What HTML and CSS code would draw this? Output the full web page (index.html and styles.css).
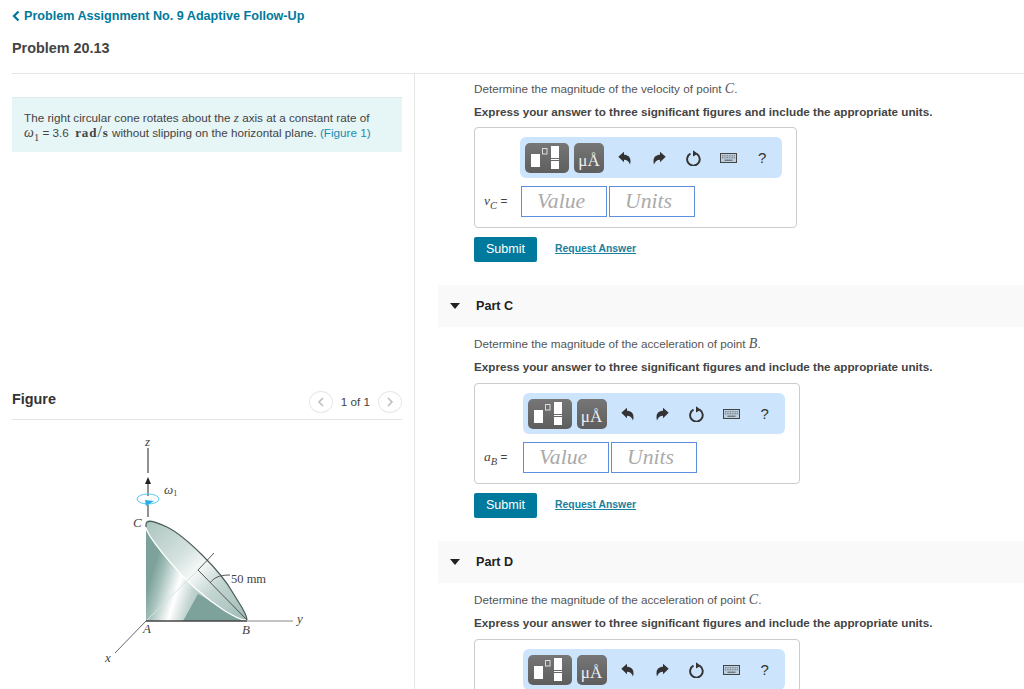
FILE: index.html
```html
<!DOCTYPE html>
<html lang="en">
<head>
<meta charset="utf-8">
<title>Problem 20.13</title>
<link rel="stylesheet" href="styles.css">
</head>
<body>
<svg class="defs" width="0" height="0" aria-hidden="true">
  <defs>
    <linearGradient id="btn" x1="0" y1="0" x2="0" y2="1">
      <stop offset="0" stop-color="#767676"/>
      <stop offset="1" stop-color="#5e5e5e"/>
    </linearGradient>
  </defs>
  <symbol id="tpl" viewBox="0 0 44 30">
    <rect x="0" y="0" width="44" height="30" rx="5" fill="url(#btn)"/>
    <rect x="6" y="11" width="9" height="13" fill="#fff"/>
    <rect x="17.500" y="5.500" width="4.500" height="5.500" fill="none" stroke="#ddd" stroke-width="1"/>
    <rect x="26" y="3" width="8" height="12" fill="#fff"/>
    <rect x="26" y="16" width="8" height="1" fill="#fff"/>
    <rect x="26" y="18" width="8" height="8" fill="#fff"/>
  </symbol>
  <symbol id="undo" viewBox="0 0 13 14">
    <path d="M.3 5.800 6 .8V3.800C10.500 3.800 13.800 7 12 13.500 11 10.300 9 8.700 6 8.700V11.300Z" fill="#333"/>
  </symbol>
  <symbol id="redo" viewBox="0 0 13 14">
    <path d="M12.700 5.800 7 .8V3.800C2.500 3.800-.8 7 1 13.500 2 10.300 4 8.700 7 8.700V11.300Z" fill="#333"/>
  </symbol>
  <symbol id="reset" viewBox="0 0 16 16">
    <path d="M10.700 3.900A6.300 6.300 0 1 1 4.500 3.700" fill="none" stroke="#333" stroke-width="1.900"/>
    <path d="M7 .2 11.800 3.700 7 6.500Z" fill="#333"/>
  </symbol>
  <symbol id="kbd" viewBox="0 0 17 10">
    <rect x=".5" y=".5" width="16" height="9" fill="#bccfe0" stroke="#444"/>
    <path d="M2 2.800h13M2 4.800h13" stroke="#666" stroke-width="1" stroke-dasharray="1 .7"/>
    <path d="M4.500 7.200h8" stroke="#555" stroke-width="1"/>
  </symbol>
</svg>

<header class="top">
  <a class="back" href="#"><svg class="chev" viewBox="0 0 8 12" aria-hidden="true"><path d="M6.500 1.500 2 6l4.500 4.500" fill="none" stroke="#007a9c" stroke-width="2.300"/></svg>Problem Assignment No. 9 Adaptive Follow-Up</a>
  <h1 class="title">Problem 20.13</h1>
</header>

<main class="cols">
  <section class="left">
    <div class="statement">
      <p>The right circular cone rotates about the <i class="mi">z</i> axis at a constant rate of<br><span class="om">ω<sub>1</sub></span> = 3.6 &nbsp;<span class="unit">rad<span class="slash">/</span>s</span> without slipping on the horizontal plane. <a href="#">(Figure 1)</a></p>
    </div>
    <div class="fighead">
      <h2>Figure</h2>
      <div class="pager">
        <span class="round"><svg viewBox="0 0 8 12"><path d="M6 2 2 6l4 4" fill="none" stroke="#bbb" stroke-width="1.500"/></svg></span>
        <span class="count">1 of 1</span>
        <span class="round"><svg viewBox="0 0 8 12"><path d="M2 2l4 4-4 4" fill="none" stroke="#bbb" stroke-width="1.500"/></svg></span>
      </div>
    </div>
    <svg class="figure" viewBox="0 0 220 259" role="img" aria-label="Cone figure">
      <defs>
        <linearGradient id="cone" gradientUnits="userSpaceOnUse" x1="50" y1="150" x2="100" y2="165">
          <stop offset="0" stop-color="#7da29b"/>
          <stop offset=".2" stop-color="#a3c0ba"/>
          <stop offset=".55" stop-color="#fff"/>
          <stop offset=".85" stop-color="#c2d4d0"/>
          <stop offset="1" stop-color="#b0c8c3"/>
        </linearGradient>
        <linearGradient id="rim" x1="0" y1="0" x2="1" y2="1">
          <stop offset="0" stop-color="#a9c4be"/>
          <stop offset=".35" stop-color="#d5e2df"/>
          <stop offset=".5" stop-color="#f4f8f7"/>
          <stop offset=".68" stop-color="#c4d6d2"/>
          <stop offset="1" stop-color="#9dbab4"/>
        </linearGradient>
        <filter id="soft" x="-5%" y="-5%" width="110%" height="110%"><feGaussianBlur stdDeviation=".4"/></filter>
      </defs>
      <g filter="url(#soft)">
        <path d="M48 18V43M48 53V66M48 75V87" stroke="#777" stroke-width="1.600" fill="none"/>
        <path d="M48 47 45 54H51Z" fill="#222"/>
        <ellipse cx="48" cy="69" rx="11" ry="5" fill="none" stroke="#55c8f2" stroke-width="1"/>
        <path d="M45 70 54 71 46 76Z" fill="#28aeea"/>
        <path d="M46 91V191H147Z" fill="url(#cone)"/>
        <path d="M83 191 98 164 146 191Z" fill="#7da29b"/>
        <path d="M46 92C48 88 55 91 67 97 85 106 120 140 133 163 140 175 147 183 147 190 143 193 135 187 125 181 105 168 85 150 70 132 58 118 48 105 46 98Z" fill="url(#rim)"/>
        <path d="M46 98C48 105 58 118 70 132 85 150 105 168 125 181 135 187 143 191 147 190" fill="none" stroke="#fff" stroke-width="1.200"/>
        <path d="M46 97C45 90 50 89 67 97 85 106 120 140 133 163 140 175 147 183 147 190" fill="none" stroke="#4b5b58" stroke-width="1.200"/>
        <path d="M47 190 98 140" stroke="#d6e3e0" stroke-width="1" fill="none"/>
        <path d="M98 140 114 123M98 140 147 190" stroke="#555" stroke-width="1" fill="none"/>
        <path d="M110 153C114 148 118 145 130 145" stroke="#555" stroke-width="1" fill="none"/>
        <path d="M147 191H193" stroke="#888" stroke-width="1" fill="none"/>
        <path d="M46 191 15 223" stroke="#666" stroke-width="1" fill="none"/>
        <path d="M46 191H147" stroke="#444" stroke-width="1.500" fill="none"/>
      </g>
      <text class="fi" x="45" y="16">z</text>
      <text class="fi" x="64" y="64">ω<tspan class="fs" dy="2">1</tspan></text>
      <text class="fi" x="33" y="97">C</text>
      <text class="ft" x="131" y="153">50 mm</text>
      <text class="fi" x="43" y="203">A</text>
      <text class="fi" x="142" y="204">B</text>
      <text class="fi" x="197" y="193">y</text>
      <text class="fi" x="5" y="232">x</text>
    </svg>
  </section>

  <section class="right">
    <div class="part">
      <p class="q">Determine the magnitude of the velocity of point <i class="mq">C</i>.</p>
      <p class="ex">Express your answer to three significant figures and include the appropriate units.</p>
      <div class="box">
        <div class="tools">
          <svg class="tpl"><use href="#tpl"/></svg>
          <span class="mu">μÅ</span>
          <svg class="undo"><use href="#undo"/></svg>
          <svg class="redo"><use href="#redo"/></svg>
          <svg class="reset"><use href="#reset"/></svg>
          <svg class="kbd"><use href="#kbd"/></svg>
          <span class="help">?</span>
        </div>
        <div class="inputs">
          <span class="var"><i>v<sub>C</sub></i> <span class="eq">=</span></span>
          <span class="field">Value</span><span class="field">Units</span>
        </div>
      </div>
      <div class="actions"><a class="submit" href="#">Submit</a><a class="req" href="#">Request Answer</a></div>
    </div>

    <div class="parthead"><span class="tri"></span>Part C</div>
    <div class="part after">
      <p class="q">Determine the magnitude of the acceleration of point <i class="mq">B</i>.</p>
      <p class="ex">Express your answer to three significant figures and include the appropriate units.</p>
      <div class="box wide">
        <div class="tools">
          <svg class="tpl"><use href="#tpl"/></svg>
          <span class="mu">μÅ</span>
          <svg class="undo"><use href="#undo"/></svg>
          <svg class="redo"><use href="#redo"/></svg>
          <svg class="reset"><use href="#reset"/></svg>
          <svg class="kbd"><use href="#kbd"/></svg>
          <span class="help">?</span>
        </div>
        <div class="inputs">
          <span class="var"><i>a<sub>B</sub></i> <span class="eq">=</span></span>
          <span class="field">Value</span><span class="field">Units</span>
        </div>
      </div>
      <div class="actions"><a class="submit" href="#">Submit</a><a class="req" href="#">Request Answer</a></div>
    </div>

    <div class="parthead"><span class="tri"></span>Part D</div>
    <div class="part after">
      <p class="q">Determine the magnitude of the acceleration of point <i class="mq">C</i>.</p>
      <p class="ex">Express your answer to three significant figures and include the appropriate units.</p>
      <div class="box wide">
        <div class="tools">
          <svg class="tpl"><use href="#tpl"/></svg>
          <span class="mu">μÅ</span>
          <svg class="undo"><use href="#undo"/></svg>
          <svg class="redo"><use href="#redo"/></svg>
          <svg class="reset"><use href="#reset"/></svg>
          <svg class="kbd"><use href="#kbd"/></svg>
          <span class="help">?</span>
        </div>
      </div>
    </div>
  </section>
</main>
</body>
</html>
```
FILE: styles.css
```css
* { box-sizing: border-box; }
html, body { margin: 0; height: 689px; overflow: hidden; background: #fff; }
body { font-family: "Liberation Sans", Arial, sans-serif; font-size: 11.7px; color: #444; }
.defs { position: absolute; }
a { color: #007a9c; text-decoration: none; }

.top { height: 74px; margin-left: 12px; border-bottom: 1px solid #e5e5e5; padding-top: 8px; }
.back { display: flex; align-items: center; font-size: 12.6px; font-weight: bold; height: 16px; line-height: 16px; }
.chev { width: 8px; height: 12px; margin-right: 4px; }
.title { margin: 16px 0 0; font-size: 14.4px; line-height: 16px; font-weight: bold; color: #444; }

.cols { display: flex; height: 615px; overflow: hidden; }
.left { width: 415px; padding: 23px 12px 0 12px; border-right: 1px solid #e5e5e5; flex: none; overflow: hidden; }
.statement { height: 55px; background: #e6f5f6; border-top: 1px solid #dfe8ea; padding: 13px 12px 0; }
.statement p { margin: 0; font-size: 11.7px; line-height: 14.5px; color: #444; }
.statement a { color: #1a8cb0; }
.mi { font-family: "Liberation Serif", serif; font-style: italic; font-size: 13px; }
.om { font-family: "Liberation Serif", serif; font-style: italic; font-size: 14px; }
.om sub { font-size: 10.5px; font-style: normal; line-height: 0; }
.unit { font-family: "Liberation Serif", serif; font-size: 13px; letter-spacing: .9px; font-weight: bold; }
.slash { font-size: 16px; font-weight: normal; line-height: 0; }
.mq { font-family: "Liberation Serif", serif; font-style: italic; font-size: 14px; }

.fighead { display: flex; align-items: center; justify-content: space-between; margin-top: 236px; height: 32px; border-bottom: 1px solid #e5e5e5; padding-bottom: 9px; }
.fighead h2 { margin: 0; font-size: 14.4px; line-height: 16px; color: #333; }
.pager { display: flex; align-items: center; gap: 8px; margin-top: 5px; font-size: 11.7px; color: #444; }
.round { width: 24px; height: 22px; border: 1px solid #e8e8e8; border-radius: 50%; display: flex; align-items: center; justify-content: center; }
.round svg { width: 8px; height: 12px; }
.figure { display: block; width: 220px; height: 259px; margin: 10px 0 0 88px; }
.fi { font-family: "Liberation Serif", serif; font-style: italic; font-size: 13px; fill: #444; }
.fs { font-size: 8px; font-style: normal; }
.ft { font-family: "Liberation Serif", serif; font-size: 12.5px; fill: #444; }

.right { flex: 1; padding-left: 23px; min-width: 0; overflow: hidden; }
.part { padding: 7px 0 0 36px; }
.part.after { padding: 9px 0 0 36px; }
.q { margin: 0; height: 16px; font-size: 11.7px; line-height: 16px; color: #555; }
.ex { margin: 7px 0 0; height: 16px; font-size: 11.7px; line-height: 16px; font-weight: bold; color: #444; }
.box { width: 323px; height: 101px; margin-top: 7px; border: 1px solid #ccc; border-radius: 4px; padding: 9px 0 0 45px; }
.box.wide { width: 326px; margin-top: 8px; padding-left: 47.5px; }
.tools { width: 262px; height: 41px; background: #cde4fd; border-radius: 6px; display: flex; align-items: center; padding-left: 5px; }
.tpl { width: 44px; height: 30px; flex: none; }
.mu { width: 30px; height: 30px; margin-left: 5px; background: linear-gradient(#767676, #5e5e5e); border-radius: 5px; color: #eee; font-family: "Liberation Serif", serif; font-size: 17px; line-height: 36px; text-align: center; flex: none; }
.undo { width: 13px; height: 14px; margin-left: 14px; flex: none; }
.redo { width: 13px; height: 14px; margin-left: 22px; flex: none; }
.reset { width: 16px; height: 16px; margin-left: 20px; flex: none; }
.kbd { width: 17px; height: 10px; margin-left: 18px; flex: none; }
.help { margin-left: 21px; font-size: 15px; color: #333; }
.inputs { display: flex; align-items: center; margin: 7px 0 0 -36px; height: 32px; }
.wide .inputs { margin-left: -38.5px; }
.var { width: 37px; font-family: "Liberation Serif", serif; font-size: 13.5px; color: #444; white-space: nowrap; }
.wide .var { width: 39px; }
.var sub { font-size: 10.5px; line-height: 0; }
.eq { font-family: "Liberation Sans", sans-serif; font-size: 11.7px; }
.field { width: 86px; height: 31px; margin-right: 2px; border: 1px solid #5f8fdc; font-family: "Liberation Serif", serif; font-style: italic; font-size: 21.7px; line-height: 29px; padding-left: 15px; color: #aaa; }
.actions { display: flex; align-items: center; margin-top: 9px; height: 25px; }
.submit { width: 63px; height: 25px; background: #007a9c; border-radius: 2px; color: #fff; text-align: center; font-size: 12.6px; line-height: 24px; }
.req { margin-left: 18px; font-size: 10.4px; font-weight: bold; text-decoration: underline; color: #1a7f9e; margin-top: -2px; }

.parthead { display: flex; align-items: center; height: 42px; margin-top: 23px; background: #f9f9f9; padding-left: 12px; font-size: 12.6px; font-weight: bold; color: #222; }
.tri { width: 0; height: 0; border: 5px solid transparent; border-top: 6px solid #222; border-bottom: 0; margin-right: 16px; }
```
